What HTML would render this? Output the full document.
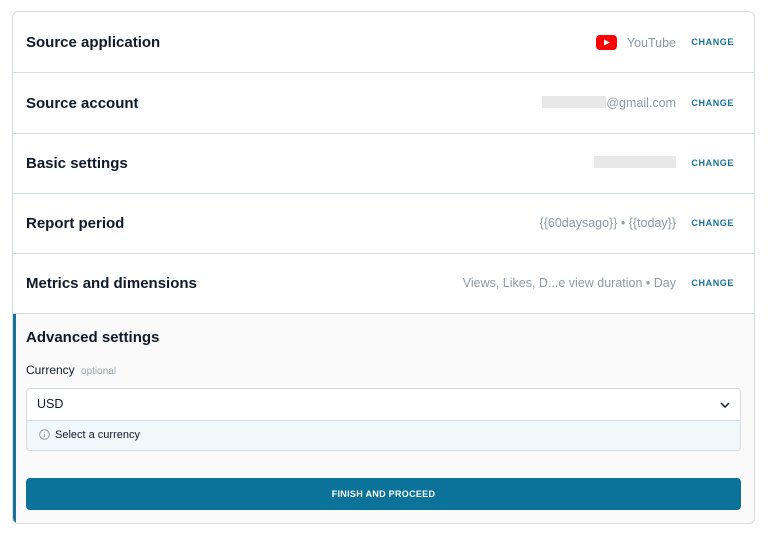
<html><head><style>
body{margin:0;background:#fff;font-family:"Liberation Sans",sans-serif;}
.c{position:absolute;left:12px;top:11px;width:741px;height:511px;border:1px solid #d5dce1;border-radius:6px;overflow:hidden;background:#fff;}
.r{position:absolute;left:0;width:741px;height:60px;border-bottom:1px solid #d5dce1;}
.t{position:absolute;left:13px;top:22px;font-size:15px;font-weight:bold;color:#0f1a2a;}
.v{position:absolute;right:78px;top:23px;font-size:12.5px;color:#8d9ba6;}
.ch{position:absolute;right:20px;top:25px;font-size:9px;font-weight:bold;color:#1a7299;letter-spacing:.6px;}
.g{display:inline-block;background:#e8e8e8;height:12px;vertical-align:-1px;}
</style></head><body>
<div class="c">
<div class="r" style="top:0"><div class="t">Source application</div>
<div class="v"><svg width="21" height="15" viewBox="0 0 21 15" style="vertical-align:-3px;margin-right:10px"><rect width="21" height="15" rx="4" fill="#f00"/><path d="M8 4.5L14 7.5L8 10.5Z" fill="#fff"/></svg>YouTube</div><div class="ch">CHANGE</div></div>
<div class="r" style="top:61px"><div class="t">Source account</div><div class="v"><span class="g" style="width:64px"></span>@gmail.com</div><div class="ch">CHANGE</div></div>
<div class="r" style="top:121px"><div class="t">Basic settings</div><div class="v"><span class="g" style="width:82px"></span></div><div class="ch">CHANGE</div></div>
<div class="r" style="top:181px"><div class="t">Report period</div><div class="v">{{60daysago}} • {{today}}</div><div class="ch">CHANGE</div></div>
<div class="r" style="top:241px"><div class="t">Metrics and dimensions</div><div class="v">Views, Likes, D...e view duration • Day</div><div class="ch">CHANGE</div></div>
<div style="position:absolute;left:0;top:302px;width:741px;height:209px;background:#fafafa;border-left:3px solid #1a7299;box-sizing:border-box;">
<div style="position:absolute;left:10px;top:15px;font-size:15px;font-weight:bold;color:#0f1a2a">Advanced settings</div>
<div style="position:absolute;left:10px;top:49px;font-size:12px;color:#0f1a2a">Currency <span style="font-size:10px;color:#9aa6ae;margin-left:3px">optional</span></div>
<div style="position:absolute;left:10px;top:74px;width:713px;height:61px;border:1px solid #d5dce1;border-radius:4px;overflow:hidden;background:#f0f8fc">
<div style="height:31px;background:#fff;border-bottom:1px solid #d5dce1;font-size:12.5px;color:#0f1a2a;line-height:31px;padding-left:10px;position:relative">USD<svg width="10" height="6" viewBox="0 0 10 6" style="position:absolute;right:10px;top:13px"><path d="M1 1L5 5L9 1" stroke="#0f1a2a" stroke-width="1.5" fill="none"/></svg></div>
<div style="font-size:11px;color:#0f1a2a;line-height:29px;padding-left:12px"><svg width="11" height="11" viewBox="0 0 11 11" style="vertical-align:-2px;margin-right:5px"><circle cx="5.5" cy="5.5" r="4.8" stroke="#8d9ba6" fill="none"/><path d="M5.5 5v3M5.5 3v.8" stroke="#8d9ba6"/></svg>Select a currency</div></div>
<div style="position:absolute;left:10px;top:164px;width:715px;height:32px;background:#0b7299;border-radius:4px;color:#fff;font-size:9px;font-weight:bold;text-align:center;line-height:32px;letter-spacing:.3px">FINISH AND PROCEED</div>
</div></div></body></html>
